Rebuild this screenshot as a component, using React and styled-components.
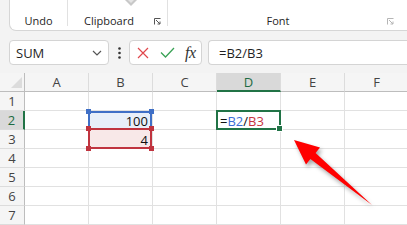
import React from "react";
import styled, { createGlobalStyle } from "styled-components";

const Global = createGlobalStyle`
  html, body { margin: 0; padding: 0; }
  body {
    background: #f3f3f3;
    font-family: "Open Sans", "Noto Sans", sans-serif;
    width: 407px;
    height: 225px;
    overflow: hidden;
  }
`;

const Page = styled.div`
  width: 407px;
  height: 225px;
  overflow: hidden;
  display: flex;
  flex-direction: column;
`;

const Ribbon = styled.div`
  margin-left: 9px;
  height: 31px;
  box-sizing: border-box;
  background: #fff;
  border-left: 1px solid #d6d6d6;
  border-bottom: 1px solid #d6d6d6;
  border-bottom-left-radius: 7px;
  display: flex;
  width: 420px;
`;

const Group = styled.div`
  position: relative;
  width: ${(p) => p.$w}px;
  height: 26px;
  box-sizing: border-box;
  border-right: ${(p) => (p.$last ? "none" : "1px solid #e1e1e1")};
  display: flex;
  align-items: flex-end;
  justify-content: ${(p) => p.$justify || "center"};
  padding-left: ${(p) => p.$pl || 0}px;
`;

const GroupLabel = styled.span`
  font-size: 11px;
  line-height: 14px;
  color: #262626;
  margin-bottom: -2px;
`;

const Launcher = styled.svg`
  position: absolute;
  right: ${(p) => p.$r}px;
  bottom: 1px;
`;

const PaintTip = styled.svg`
  position: absolute;
  left: 56px;
  top: 0;
`;

const FormulaRow = styled.div`
  margin-top: 9px;
  height: 25px;
  display: flex;
  align-items: stretch;
  padding-left: 9px;
`;

const NameBox = styled.div`
  width: 100px;
  box-sizing: border-box;
  background: #fff;
  border: 1px solid #d4d4d4;
  border-radius: 4px;
  display: flex;
  align-items: center;
  justify-content: space-between;
  padding: 0 6px 0 6px;
  font-size: 13px;
  color: #1f1f1f;
`;

const Dots = styled.svg`
  margin: 0 8px 0 9px;
  align-self: center;
`;

const FxBox = styled.div`
  width: 73px;
  box-sizing: border-box;
  background: #fff;
  border: 1px solid #d4d4d4;
  border-radius: 4px;
  display: flex;
  align-items: center;
  padding-left: 7px;
  gap: 11px;
`;

const Fx = styled.span`
  font-family: "Liberation Serif", "DejaVu Serif", serif;
  font-style: italic;
  font-size: 16px;
  color: #333;
  margin-left: -1px;
  letter-spacing: -0.5px;
`;

const FormulaInput = styled.div`
  margin-left: 6px;
  flex: 1;
  box-sizing: border-box;
  background: #fff;
  border: 1px solid #d4d4d4;
  border-right: none;
  border-radius: 4px 0 0 4px;
  display: flex;
  align-items: center;
  padding-left: 10px;
  font-size: 13px;
  color: #1f1f1f;
`;

const GridWrap = styled.div`
  position: relative;
  margin-top: 8px;
`;

const Grid = styled.div`
  display: grid;
  grid-template-columns: 25px repeat(6, 64px);
  grid-auto-rows: 19px;
`;

const Corner = styled.div`
  position: relative;
  background: #f5f5f5;
  box-sizing: border-box;
  border-right: 1px solid #bdbdbd;
  border-bottom: 1px solid #bdbdbd;
`;

const CornerTri = styled.div`
  position: absolute;
  right: 2px;
  bottom: 3px;
  width: 0;
  height: 0;
  border-left: 11px solid transparent;
  border-bottom: 11px solid #dcdcdc;
`;

const ColHead = styled.div`
  box-sizing: border-box;
  background: ${(p) => (p.$active ? "#d9d9d9" : "#f5f5f5")};
  border-right: 1px solid #dcdcdc;
  border-bottom: ${(p) => (p.$active ? "2px solid #217346" : "1px solid #bdbdbd")};
  font-family: "Open Sans", sans-serif;
  font-size: 13px;
  color: ${(p) => (p.$active ? "#1e6b43" : "#444")};
  display: flex;
  align-items: center;
  justify-content: center;
  padding-top: ${(p) => (p.$active ? 1 : 0)}px;
`;

const RowHead = styled.div`
  box-sizing: border-box;
  background: ${(p) => (p.$active ? "#d9d9d9" : "#f5f5f5")};
  border-right: ${(p) => (p.$active ? "2px solid #217346" : "1px solid #bdbdbd")};
  border-bottom: 1px solid #dcdcdc;
  font-size: 13px;
  color: ${(p) => (p.$active ? "#1e6b43" : "#444")};
  display: flex;
  align-items: center;
  justify-content: center;
`;

const Cell = styled.div`
  position: relative;
  box-sizing: border-box;
  background: ${(p) => p.$bg || "#fff"};
  border-right: 1px solid #e1e1e1;
  border-bottom: 1px solid #e1e1e1;
  font-size: 13px;
  line-height: 18px;
  color: #111;
  text-align: ${(p) => p.$align || "left"};
  padding: 1px 4px 0 3px;
  white-space: nowrap;
`;

const RangeBox = styled.div`
  position: absolute;
  left: -1px;
  top: ${(p) => p.$top}px;
  right: 0;
  bottom: -1px;
  border: 2px solid ${(p) => p.$color};
  pointer-events: none;
  z-index: 2;
`;

const Handle = styled.span`
  position: absolute;
  width: 5px;
  height: 5px;
  background: ${(p) => p.$color};
  ${(p) => (p.$v === "t" ? "top: -4px;" : "bottom: -4px;")}
  ${(p) => (p.$h === "l" ? "left: -4px;" : "right: -4px;")}
`;

const SelectBox = styled.div`
  position: absolute;
  left: -1px;
  top: -1px;
  right: -1px;
  bottom: -1px;
  border: 2px solid #217346;
  z-index: 3;
`;

const FillHandle = styled.span`
  position: absolute;
  right: -4px;
  bottom: -4px;
  width: 5px;
  height: 5px;
  background: #217346;
  border: 1px solid #fff;
`;

const Ref = styled.span`
  color: ${(p) => p.$c};
`;

const ArrowSvg = styled.svg`
  position: absolute;
  left: 0;
  top: 0;
  pointer-events: none;
  z-index: 5;
  filter: drop-shadow(2px 3px 2px rgba(0, 0, 0, 0.35));
`;

const cols = ["A", "B", "C", "D", "E", "F"];

function CellContent({ r, c }) {
  if (r === 2 && c === "B") {
    return (
      <Cell $bg="#e8eff9" $align="right">
        100
        <RangeBox $color="#3f6fc6" $top={0}>
          <Handle $color="#3f6fc6" $v="t" $h="l" />
          <Handle $color="#3f6fc6" $v="t" $h="r" />
        </RangeBox>
      </Cell>
    );
  }
  if (r === 3 && c === "B") {
    return (
      <Cell $bg="#f8e8e8" $align="right">
        4
        <RangeBox $color="#c0343f" $top={-2}>
          <Handle $color="#c0343f" $v="t" $h="l" />
          <Handle $color="#c0343f" $v="t" $h="r" />
          <Handle $color="#c0343f" $v="b" $h="l" />
          <Handle $color="#c0343f" $v="b" $h="r" />
        </RangeBox>
      </Cell>
    );
  }
  if (r === 2 && c === "D") {
    return (
      <Cell>
        =<Ref $c="#3b6fd6">B2</Ref>/<Ref $c="#c8343f">B3</Ref>
        <SelectBox>
          <FillHandle />
        </SelectBox>
      </Cell>
    );
  }
  return <Cell />;
}

export default function App() {
  const rows = [1, 2, 3, 4, 5, 6, 7];
  return (
    <Page>
      <Global />
      <Ribbon>
        <Group $w={58}>
          <GroupLabel>Undo</GroupLabel>
        </Group>
        <Group $w={100} $justify="flex-start" $pl={16}>
          <PaintTip width="14" height="7" viewBox="0 0 14 7">
            <polygon points="1,0 13,0 7,6" fill="#c8c8c8" />
            <polygon points="4,0 10,0 7,3" fill="#e4e4e4" />
          </PaintTip>
          <GroupLabel>Clipboard</GroupLabel>
          <Launcher $r={6} width="7" height="7" viewBox="0 0 7 7">
            <path d="M0.5 6.5 V0.5 H6.5" stroke="#555" fill="none" strokeWidth="1" />
            <path d="M2 2 L6 6 M6 3.5 V6 H3.5" stroke="#555" fill="none" strokeWidth="1" />
          </Launcher>
        </Group>
        <Group $w={220} $last>
          <GroupLabel>Font</GroupLabel>
          <Launcher $r={-6} width="7" height="7" viewBox="0 0 7 7">
            <path d="M0.5 6.5 V0.5 H6.5" stroke="#b5b5b5" fill="none" strokeWidth="1" />
            <path d="M2 2 L6 6 M6 3.5 V6 H3.5" stroke="#b5b5b5" fill="none" strokeWidth="1" />
          </Launcher>
        </Group>
      </Ribbon>

      <FormulaRow>
        <NameBox>
          <span>SUM</span>
          <svg width="10" height="6" viewBox="0 0 10 6">
            <path d="M1 1 L5 5 L9 1" stroke="#555" strokeWidth="1.2" fill="none" />
          </svg>
        </NameBox>
        <Dots width="3" height="12" viewBox="0 0 3 12">
          <circle cx="1.5" cy="1.5" r="1.3" fill="#333" />
          <circle cx="1.5" cy="6" r="1.3" fill="#333" />
          <circle cx="1.5" cy="10.5" r="1.3" fill="#333" />
        </Dots>
        <FxBox>
          <svg width="12" height="12" viewBox="0 0 12 12">
            <path d="M1 1 L11 11 M11 1 L1 11" stroke="#e0474c" strokeWidth="1.2" />
          </svg>
          <svg width="15" height="11" viewBox="0 0 15 11">
            <path d="M1 5.5 L5.5 10 L14 1" stroke="#3aa256" strokeWidth="1.3" fill="none" />
          </svg>
          <Fx>fx</Fx>
        </FxBox>
        <FormulaInput>=B2/B3</FormulaInput>
      </FormulaRow>

      <GridWrap>
        <Grid>
          <Corner>
            <CornerTri />
          </Corner>
          {cols.map((c) => (
            <ColHead key={c} $active={c === "D"}>
              {c}
            </ColHead>
          ))}
          {rows.map((r) => (
            <React.Fragment key={r}>
              <RowHead $active={r === 2}>{r}</RowHead>
              {cols.map((c) => (
                <CellContent key={c} r={r} c={c} />
              ))}
            </React.Fragment>
          ))}
        </Grid>
        <ArrowSvg width="407" height="152" viewBox="0 0 407 152">
          <polygon
            points="294,67 320,74.6 315.6,79.9 372,132 310.4,86.1 306,91.4"
            fill="#ff0000"
          />
        </ArrowSvg>
      </GridWrap>
    </Page>
  );
}
